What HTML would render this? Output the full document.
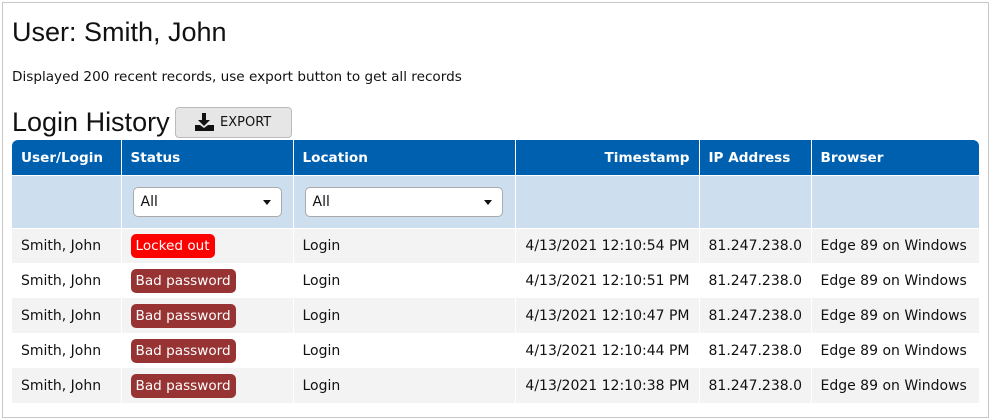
<!DOCTYPE html>
<html><head><style>
body{margin:0;background:#fff;font-family:"DejaVu Sans","Liberation Sans",sans-serif;color:#111;}
.frame{position:absolute;left:2px;top:2px;width:985px;height:414px;border:1px solid #c8c8c8;}
h1{position:absolute;left:12px;top:17px;margin:0;font:27px "Liberation Sans",sans-serif;}
.note{position:absolute;left:12px;top:69px;font-size:13.6px;}
h2{position:absolute;left:12px;top:107px;margin:0;font:27px "Liberation Sans",sans-serif;}
.btn{position:absolute;left:175px;top:107px;width:117px;height:31px;border:1px solid #bbb;border-radius:4px;background:#e6e6e6;font-size:13px;box-sizing:border-box;}
.btn span{position:absolute;left:44px;top:7px;}
.btn svg{position:absolute;left:18px;top:5px;}
table{position:absolute;left:12px;top:140px;width:967px;border-collapse:collapse;font-size:14px;table-layout:fixed;}
th{background:#0060b0;color:#fff;text-align:left;height:35px;padding:0 9px;font-weight:bold;border-right:1px solid #fff;border-bottom:1px solid #fff;white-space:nowrap;padding-top:2px;box-sizing:border-box;font-size:13.6px;}
th:first-child{border-top-left-radius:6px}
th:last-child{border-top-right-radius:6px;border-right:none}
td{height:35px;padding:1px 9px 0;border-right:1px solid #fff;box-sizing:border-box;white-space:nowrap;overflow:hidden;}
td:last-child{border-right:none}
tr.f td{background:#cddfee;height:53px;border-bottom:1px solid #fff;}
tr.r td{background:#f3f3f3}
tr.w td{background:#fff}
.sel{width:149px;height:30px;border:1px solid #aaa;border-radius:5px;background:#fff;box-sizing:border-box;position:relative;font-size:14px;}
.sel span{position:absolute;left:7px;top:6px}
.sel i{position:absolute;right:10px;top:12px;border-left:4px solid transparent;border-right:4px solid transparent;border-top:5px solid #111;}
.b{display:inline-block;color:#fff;border-radius:5px;padding:4px 5px;font-size:13.6px;line-height:16px;}
.lo{background:#f00}.bp{background:#973333}
.rt{text-align:right}
</style></head><body>
<div class="frame"></div>
<h1>User: Smith, John</h1>
<div class="note">Displayed 200 recent records, use export button to get all records</div>
<h2>Login History</h2>
<div class="btn"><svg width="22" height="18" viewBox="0 0 22 18"><path d="M8 0h4v7h4l-6 6-6-6h4z" fill="#111"/><path d="M1 12h5l4 3 4-3h6v6H1z" fill="#111"/></svg><span>EXPORT</span></div>
<table>
<colgroup><col style="width:109px"><col style="width:172px"><col style="width:222px"><col style="width:184px"><col style="width:112px"><col style="width:168px"></colgroup>
<tr><th>User/Login</th><th>Status</th><th>Location</th><th class="rt">Timestamp</th><th>IP Address</th><th>Browser</th></tr>
<tr class="f"><td></td><td style="padding-left:11px"><div class="sel"><span>All</span><i></i></div></td><td style="padding-left:11px"><div class="sel" style="width:198px"><span>All</span><i></i></div></td><td></td><td></td><td></td></tr>
<tr class="r"><td>Smith, John</td><td><span class="b lo">Locked out</span></td><td>Login</td><td class="rt">4/13/2021 12:10:54 PM</td><td>81.247.238.0</td><td>Edge 89 on Windows</td></tr>
<tr class="w"><td>Smith, John</td><td><span class="b bp">Bad password</span></td><td>Login</td><td class="rt">4/13/2021 12:10:51 PM</td><td>81.247.238.0</td><td>Edge 89 on Windows</td></tr>
<tr class="r"><td>Smith, John</td><td><span class="b bp">Bad password</span></td><td>Login</td><td class="rt">4/13/2021 12:10:47 PM</td><td>81.247.238.0</td><td>Edge 89 on Windows</td></tr>
<tr class="w"><td>Smith, John</td><td><span class="b bp">Bad password</span></td><td>Login</td><td class="rt">4/13/2021 12:10:44 PM</td><td>81.247.238.0</td><td>Edge 89 on Windows</td></tr>
<tr class="r"><td>Smith, John</td><td><span class="b bp">Bad password</span></td><td>Login</td><td class="rt">4/13/2021 12:10:38 PM</td><td>81.247.238.0</td><td>Edge 89 on Windows</td></tr>
</table>
</body></html>
